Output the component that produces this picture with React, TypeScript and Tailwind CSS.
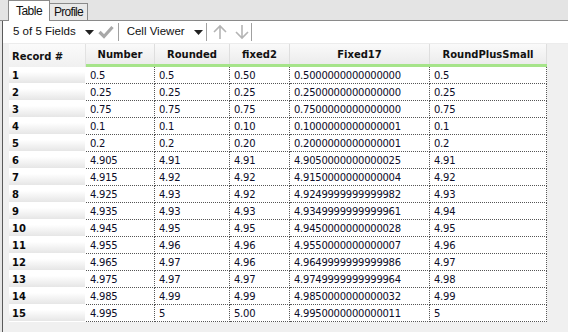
import React from "react";

const rows: string[][] = [
  ["1", "0.5", "0.5", "0.50", "0.5000000000000000", "0.5"],
  ["2", "0.25", "0.25", "0.25", "0.2500000000000000", "0.25"],
  ["3", "0.75", "0.75", "0.75", "0.7500000000000000", "0.75"],
  ["4", "0.1", "0.1", "0.10", "0.1000000000000001", "0.1"],
  ["5", "0.2", "0.2", "0.20", "0.2000000000000001", "0.2"],
  ["6", "4.905", "4.91", "4.91", "4.9050000000000025", "4.91"],
  ["7", "4.915", "4.92", "4.92", "4.9150000000000004", "4.92"],
  ["8", "4.925", "4.93", "4.92", "4.9249999999999982", "4.93"],
  ["9", "4.935", "4.93", "4.93", "4.9349999999999961", "4.94"],
  ["10", "4.945", "4.95", "4.95", "4.9450000000000028", "4.95"],
  ["11", "4.955", "4.96", "4.96", "4.9550000000000007", "4.96"],
  ["12", "4.965", "4.97", "4.96", "4.9649999999999986", "4.97"],
  ["13", "4.975", "4.97", "4.97", "4.9749999999999964", "4.98"],
  ["14", "4.985", "4.99", "4.99", "4.9850000000000032", "4.99"],
  ["15", "4.995", "5", "5.00", "4.9950000000000011", "5"],
];

const widths = ["w-[69px]", "w-[75px]", "w-[60px]", "w-[140px]", "w-[117px]"];
const headers = ["Number", "Rounded", "fixed2", "Fixed17", "RoundPlusSmall"];

function Caret() {
  return (
    <svg width="9" height="5" viewBox="0 0 9 5" className="block">
      <path d="M0 0h9L4.5 5z" fill="#222" />
    </svg>
  );
}

export default function App() {
  return (
    <div className="w-[568px] h-[332px] bg-[#f0f0f0] flex flex-col overflow-hidden" style={{ fontFamily: '"Liberation Sans", Arial, sans-serif' }}>
      {/* tab bar */}
      <div className="h-[21px] bg-[#e4e4e4] flex items-end border-b border-[#8a8a8a] pl-[8px] shrink-0">
        <div className="h-[21px] w-[42px] bg-white border border-b-0 border-[#8a8a8a] -mb-px flex items-center justify-center text-[12px] tracking-[-0.5px] text-[#111]">
          Table
        </div>
        <div className="h-[17px] w-[38px] bg-[#e9e9e9] border border-l-0 border-b-0 border-[#8a8a8a] flex items-center justify-center text-[12px] tracking-[-0.7px] text-[#111]">
          Profile
        </div>
      </div>
      <div className="flex-1 flex min-h-0">
        <div className="w-[3px] bg-[#e6e6e6] border-r border-[#5a5a5a] shrink-0" />
        <div className="flex-1 flex flex-col min-w-0">
          {/* toolbar */}
          <div className="h-[23px] bg-white border-b border-[#ececec] flex items-center shrink-0 text-[11.5px] text-[#111]">
            <span className="ml-[10px]">5 of 5 Fields</span>
            <span className="ml-[9px]"><Caret /></span>
            <svg width="16" height="14" viewBox="0 0 16 14" className="ml-[4px]">
              <path d="M1.5 7l4.5 4.5L14.5 2" fill="none" stroke="#a8a8a8" strokeWidth="3.2" />
            </svg>
            <div className="ml-[4px] w-px h-[18px] bg-[#a0a0a0]" />
            <span className="ml-[8px]">Cell Viewer</span>
            <span className="ml-[9px]"><Caret /></span>
            <div className="ml-[3px] w-px h-[18px] bg-[#a0a0a0]" />
            <svg width="16" height="16" viewBox="0 0 16 16" className="ml-[5px]">
              <path d="M8 15V2M2 8l6-6 6 6" fill="none" stroke="#b4b4b4" strokeWidth="1.6" />
            </svg>
            <svg width="16" height="16" viewBox="0 0 16 16" className="ml-[6px]">
              <path d="M8 1v13M2 8l6 6 6-6" fill="none" stroke="#b4b4b4" strokeWidth="1.6" />
            </svg>
            <div className="ml-[1px] w-px h-[18px] bg-[#a0a0a0]" />
          </div>
          {/* grid */}
          <div className="flex-1 pl-[6px]" style={{ fontFamily: '"DejaVu Sans", Verdana, sans-serif' }}>
            <div className="flex">
              <div className="w-[77px] h-[23px] bg-gradient-to-b from-[#fbfbfb] to-[#f0f0f0] border-r border-[#e2e2e2] flex items-start">
                <span className="mt-[5px] ml-[3px] text-[10px] font-bold text-[#111]">Record #</span>
              </div>
              <div className="flex flex-col">
                <div className="flex h-[20px]">
                  {headers.map((h, i) => (
                    <div key={h} className={`${widths[i]} h-[20px] bg-gradient-to-b from-[#fafafa] to-[#ececec] border-r border-[#dedede] flex items-center justify-center pt-px text-[10px] font-bold text-[#111]`}>
                      {h}
                    </div>
                  ))}
                </div>
                <div className="h-[3px] bg-[#a6e48a]" />
              </div>
            </div>
            {rows.map((r) => (
              <div key={r[0]} className="flex h-[17px]">
                <div className="w-[77px] h-[17px] bg-white pr-px pb-px">
                  <div className="h-full bg-gradient-to-b from-white from-30% to-[#e6e6e6] flex items-center pl-[3px] text-[10px] font-bold text-[#0a0a0a]">
                    {r[0]}
                  </div>
                </div>
                {r.slice(1).map((c, i) => (
                  <div key={i} className={`${widths[i]} h-[17px] bg-white border-b border-r border-dotted border-[#555] flex items-center pl-[4px] text-[10px] tracking-[-0.25px] text-[#0c0c28]`}>
                    {c}
                  </div>
                ))}
              </div>
            ))}
          </div>
        </div>
      </div>
    </div>
  );
}
